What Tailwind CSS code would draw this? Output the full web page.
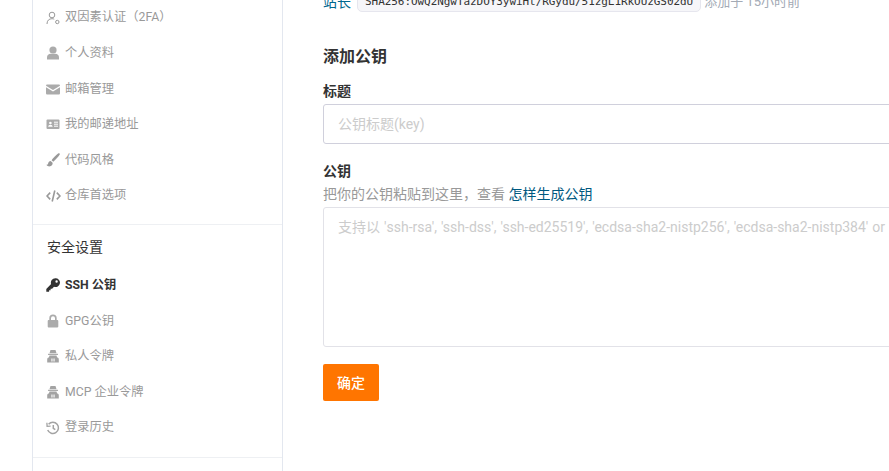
<!DOCTYPE html>
<html lang="en">
<head>
    <meta charset="UTF-8">
    <meta name="viewport" content="width=device-width, initial-scale=1.0">
    <title>SSH 公钥</title>
    <script src="https://cdn.jsdelivr.net/npm/@tailwindcss/browser@4"></script>
</head>
<body class="bg-white h-[471px] overflow-hidden font-['Roboto','Noto_Sans_CJK_SC',sans-serif] text-[#999999]">
    <div class="flex h-[471px] overflow-hidden pl-8">
        <!-- Sidebar -->
        <aside class="w-[251px] shrink-0 h-[500px] -mt-[0.2px] border-x border-[#e3e7ef] text-[12.25px]">
            <a class="flex items-center h-[35.6px] pl-[13px]">
                <svg class="w-[14px] h-[14px] mr-[5px] shrink-0" viewBox="0 0 14 14" fill="none" stroke="#999999" stroke-width="1"><circle cx="6" cy="4" r="2.8"/><path d="M1 13c0-3.5 2-5.3 5-5.3 1 0 1.600.2 2.200.5"/><circle cx="11.300" cy="11" r="1.700"/></svg>
                <span>双因素认证（2FA）</span>
            </a>
            <a class="flex items-center h-[35.6px] pl-[13px]">
                <svg class="w-[14px] h-[14px] mr-[5px] shrink-0" viewBox="0 0 14 14" fill="#ababab"><circle cx="7" cy="4" r="3.600"/><path d="M1 13.500v-2.300C1 9 2.800 7.800 4.600 7.800h4.800c1.800 0 3.600 1.200 3.600 3.400v2.300z"/></svg>
                <span>个人资料</span>
            </a>
            <a class="flex items-center h-[35.6px] pl-[13px]">
                <svg class="w-[14px] h-[14px] mr-[5px] shrink-0" viewBox="0 0 14 14" fill="#ababab"><path d="M1.300 2.500h11.400c.7 0 1.300.5 1.300 1.200L7 7.900 0 3.700c0-.7.6-1.200 1.300-1.200z"/><path d="M0 5.200l7 4.200 7-4.200v6c0 .7-.6 1.300-1.300 1.300H1.300C.6 12.500 0 11.900 0 11.200z"/></svg>
                <span>邮箱管理</span>
            </a>
            <a class="flex items-center h-[35.6px] pl-[13px]">
                <svg class="w-[14px] h-[14px] mr-[5px] shrink-0" viewBox="0 0 14 14"><rect x="0.5" y="2.500" width="13" height="9.500" rx="1" fill="#ababab"/><circle cx="4.400" cy="6" r="1.300" fill="#fff"/><path d="M2.200 9.800c0-1.300 1-2 2.200-2s2.200.7 2.200 2z" fill="#fff"/><path d="M8 5.200h4M8 7.200h4M8 9.200h4" stroke="#fff" stroke-width="1"/></svg>
                <span>我的邮递地址</span>
            </a>
            <a class="flex items-center h-[35.6px] pl-[13px]">
                <svg class="w-[14px] h-[14px] mr-[5px] shrink-0" viewBox="0 0 14 14" fill="#999999"><path d="M13.600.4c-.5-.4-1-.3-1.500.1C9.800 2.500 7 5.200 5.600 7.200l1.700 1.500c1.900-1.700 4.600-4.400 6.300-6.900.3-.5.4-1 0-1.400z"/><path d="M4.700 8c-1.500.2-2.300 1.100-2.500 2.200C2 11.300 1.300 11.700.4 11.800c.8 1.300 2.300 1.800 3.800 1.500 1.600-.3 2.700-1.700 2.400-3.500z"/></svg>
                <span>代码风格</span>
            </a>
            <a class="flex items-center h-[35.6px] pl-[13px]">
                <svg class="w-[15px] h-[14px] mr-[4px] shrink-0" viewBox="0 0 15 14" fill="none" stroke="#999999" stroke-width="1.600"><path d="M4.200 3.600L1 7l3.200 3.400M10.800 3.600L14 7l-3.200 3.400M8.800 1.500L6.200 12.500"/></svg>
                <span>仓库首选项</span>
            </a>
            <div class="mt-[10.6px] border-t border-[#eef0f3] pt-[10px]">
                <h4 class="h-6 pl-[14px] leading-6 text-sm font-normal text-[#333333]">安全设置</h4>
            </div>
            <a class="flex items-center h-[35.6px] mt-[8.4px] pl-[13px] font-bold text-[#333333]">
                <svg class="w-[14px] h-[14px] mr-[5px] shrink-0" viewBox="0 0 14 14" fill="#333333"><path fill-rule="evenodd" d="M9.300.3a4.400 4.400 0 0 0-4.200 5.800L.3 10.900v2.800h2.800v-1.500h1.500v-1.500h1.500l1.900-1.900A4.400 4.400 0 1 0 9.300.3zm1.300 2a1.200 1.200 0 1 1 0 2.400 1.200 1.200 0 0 1 0-2.400z"/></svg>
                <span>SSH 公钥</span>
            </a>
            <a class="flex items-center h-[35.6px] pl-[13px]">
                <svg class="w-[14px] h-[14px] mr-[5px] shrink-0" viewBox="0 0 14 14" fill="#ababab"><path fill-rule="evenodd" d="M7 .6A3.700 3.700 0 0 0 3.300 4.300V6H2.600c-.5 0-.9.4-.9.9v5.600c0 .5.4.9.9.9h8.800c.5 0 .9-.4.9-.9V6.900c0-.5-.4-.9-.9-.9h-.7V4.300A3.700 3.700 0 0 0 7 .6zM5 6V4.300a2 2 0 0 1 4 0V6z"/></svg>
                <span>GPG公钥</span>
            </a>
            <a class="flex items-center h-[35.6px] pl-[13px]">
                <svg class="w-[14px] h-[14px] mr-[5px] shrink-0" viewBox="0 0 14 14" fill="#a3a3a3"><path d="M4.500 1h5l1 3.200h-7z"/><path d="M2 4.800h10v1.100H2z"/><path fill-rule="evenodd" d="M3.500 6.400h7l.6 2h.7c.7.4 1 1.100 1 2v3.100H1.200v-3.100c0-.9.3-1.600 1-2h.7zM5.400 9.500v3h1.100v-3zm2.100 0v3h1.100v-3z"/></svg>
                <span>私人令牌</span>
            </a>
            <a class="flex items-center h-[35.6px] pl-[13px]">
                <svg class="w-[14px] h-[14px] mr-[5px] shrink-0" viewBox="0 0 14 14" fill="#a3a3a3"><path d="M4.500 1h5l1 3.200h-7z"/><path d="M2 4.800h10v1.100H2z"/><path fill-rule="evenodd" d="M3.500 6.400h7l.6 2h.7c.7.4 1 1.100 1 2v3.100H1.200v-3.100c0-.9.3-1.600 1-2h.7zM5.400 9.500v3h1.100v-3zm2.100 0v3h1.100v-3z"/></svg>
                <span>MCP 企业令牌</span>
            </a>
            <a class="flex items-center h-[35.6px] pl-[13px]">
                <svg class="w-[14px] h-[14px] mr-[5px] shrink-0" viewBox="0 0 14 14" fill="none" stroke="#a3a3a3" stroke-width="1.500"><path d="M2.600 3.200A5.600 5.600 0 1 1 1.700 9"/><path d="M7.300 4v3.300l2 1.300"/><path d="M.9 1.800l.2 3.500 3.500-.2" stroke-width="1.300"/></svg>
                <span>登录历史</span>
            </a>
            <div class="mt-[11.6px] border-t border-[#eef0f3]"></div>
        </aside>

        <!-- Main -->
        <main class="ml-10 w-[760px] shrink-0 -mt-3">
            <div class="flex items-center h-6 text-[13px]">
                <a class="pt-[3px] text-sm text-[#00688f] mr-[6px]">站长</a>
                <code class="h-[24px] pl-[7px] pr-[7px] leading-[25px] border border-[#e6e6ee] rounded-[5px] bg-[#f6f6f9] text-[#333333] font-['DejaVu_Sans_Mono',monospace] text-[11px] tracking-[-0.06px] whitespace-nowrap">SHA256:OwQ2NgwTazDOY3ywiHt/RGydu/51zgL1RkOUzGS02dU</code>
                <span class="pt-[3px] ml-[3px] text-[#a3aab5]">添加于 15小时前</span>
            </div>
            <h3 class="mt-[33px] h-6 leading-6 text-base font-bold text-[#333333]">添加公钥</h3>
            <form>
                <label class="block mt-[12px] h-5 leading-5 text-sm font-bold text-[#333333]">标题</label>
                <input type="text" placeholder="公钥标题(key)"
                    class="block mt-[3px] w-full h-10 px-[14px] text-sm border border-[#d0d0dc] rounded-[3px] placeholder:text-[#cccccc] outline-none">
                <label class="block mt-[17px] h-5 leading-5 text-sm font-bold text-[#333333]">公钥</label>
                <p class="mt-[3px] h-5 leading-5 text-sm">把你的公钥粘贴到这里&#65292;查看 <a class="text-[#005980]">怎样生成公钥</a></p>
                <textarea wrap="off" placeholder="支持以 'ssh-rsa', 'ssh-dss', 'ssh-ed25519', 'ecdsa-sha2-nistp256', 'ecdsa-sha2-nistp384' or 'ecdsa-sha2-nistp521' 开头"
                    class="block mt-[3px] w-full h-[140px] px-[14px] py-[9px] text-sm leading-5 [word-spacing:0.6px] border border-[#e2e2e8] rounded-[3px] placeholder:text-[#cccccc] outline-none resize-none overflow-hidden"></textarea>
                <button type="button" class="block mt-[17px] w-14 h-[37px] rounded-[2px] bg-[#ff7500] text-white text-sm font-medium">确定</button>
            </form>
        </main>
    </div>
</body>
</html>
